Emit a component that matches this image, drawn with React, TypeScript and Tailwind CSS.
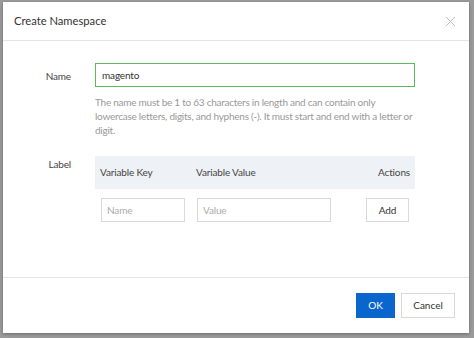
export default function App() {
  return (
    <div
      className="w-[474px] h-[338px] bg-[#9a9a9a] pt-[2px] pl-[3px] overflow-hidden"
      style={{ fontFamily: 'Lato, "Open Sans", "Liberation Sans", sans-serif' }}
    >
      <div className="w-[466px] h-[331px] bg-white flex flex-col shadow-[0_1px_3px_rgba(0,0,0,0.3)]">
        {/* Header */}
        <div className="h-[39px] flex items-center justify-between pl-[11px] pr-[13px] border-b border-[#e5e5e5] shrink-0">
          <span className="text-[11.2px] text-[#333]">Create Namespace</span>
          <svg width="11" height="11" viewBox="0 0 11 11" className="text-[#bbb]">
            <path d="M1 1L10 10M10 1L1 10" stroke="currentColor" strokeWidth="1" />
          </svg>
        </div>

        {/* Body */}
        <div className="flex-1 pt-[22px] text-[10px] text-[#444] tracking-[-0.15px]">
          <div className="flex">
            <div className="w-[68px] text-right pt-[6px]">Name</div>
            <div className="ml-[24px] w-[320px]">
              <input
                defaultValue="magento"
                className="w-full h-[24px] border border-[#5fb85a] px-[6px] text-[10px] text-[#333] outline-none"
              />
              <p className="mt-[8px] text-[10px] leading-[14px] text-[#999] tracking-[-0.25px]">
                The name must be 1 to 63 characters in length and can contain only lowercase letters, digits, and hyphens (-). It must start and end with a letter or digit.
              </p>
            </div>
          </div>

          <div className="flex mt-[19px]">
            <div className="w-[68px] text-right pt-[1px]">Label</div>
            <div className="ml-[24px] w-[320px]">
              <div className="h-[33px] bg-[#eef2f6] flex items-center px-[5px] text-[#444]">
                <span className="w-[96px]">Variable Key</span>
                <span className="flex-1">Variable Value</span>
                <span>Actions</span>
              </div>
              <div className="flex items-center mt-[9px] pl-[6px]">
                <input
                  placeholder="Name"
                  className="w-[84px] h-[24px] border border-[#d9d9d9] px-[5px] text-[10px] placeholder:text-[#aaa] outline-none"
                />
                <input
                  placeholder="Value"
                  className="ml-[12px] w-[134px] h-[24px] border border-[#d9d9d9] px-[5px] text-[10px] placeholder:text-[#aaa] outline-none"
                />
                <button className="ml-auto mr-[6px] w-[43px] h-[24px] border border-[#d9d9d9] bg-white text-[10px] text-[#333]">
                  Add
                </button>
              </div>
            </div>
          </div>
        </div>

        {/* Footer */}
        <div className="h-[56px] border-t border-[#e5e5e5] flex items-center justify-end pr-[14px] gap-[6px] shrink-0">
          <button className="w-[39px] h-[25px] bg-[#0a66cc] text-white text-[10px]">OK</button>
          <button className="w-[54px] h-[25px] border border-[#d9d9d9] bg-white text-[#333] text-[10px]">
            Cancel
          </button>
        </div>
      </div>
    </div>
  );
}
